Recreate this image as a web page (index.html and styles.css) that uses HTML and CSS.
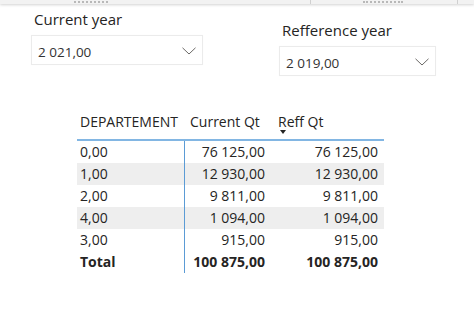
FILE: index.html
```html
<!DOCTYPE html>
<html lang="fr">
<head>
<meta charset="utf-8">
<title>Report</title>
<link rel="stylesheet" href="styles.css">
</head>
<body>
<div class="strip">
  <div class="strip-cell strip-a"><span class="strip-mark mark-a"></span></div>
  <div class="strip-cell strip-b"><span class="strip-mark mark-b"></span></div>
  <div class="strip-cell strip-c"></div>
</div>

<div class="slicers">
  <div class="slicer slicer-current">
    <div class="slicer-label">Current year</div>
    <div class="slicer-box">
      <span class="slicer-value">2 021,00</span>
      <svg class="chev" width="14" height="8" viewBox="0 0 14 8"><path d="M0.5 0.8 L7 7 L13.5 0.8" fill="none" stroke="#6b6966" stroke-width="1"/></svg>
    </div>
  </div>
  <div class="slicer slicer-ref">
    <div class="slicer-label">Refference year</div>
    <div class="slicer-box">
      <span class="slicer-value">2 019,00</span>
      <svg class="chev" width="14" height="8" viewBox="0 0 14 8"><path d="M0.5 0.8 L7 7 L13.5 0.8" fill="none" stroke="#6b6966" stroke-width="1"/></svg>
    </div>
  </div>
</div>

<table class="grid">
  <thead>
    <tr>
      <th class="c1">DEPARTEMENT</th>
      <th class="c2">Current Qt</th>
      <th class="c3"><span class="sorted">Reff Qt<span class="sort-arrow"></span></span></th>
    </tr>
  </thead>
  <tbody>
    <tr><td class="c1">0,00</td><td class="c2 num">76 125,00</td><td class="c3 num">76 125,00</td></tr>
    <tr class="alt"><td class="c1">1,00</td><td class="c2 num">12 930,00</td><td class="c3 num">12 930,00</td></tr>
    <tr><td class="c1">2,00</td><td class="c2 num">9 811,00</td><td class="c3 num">9 811,00</td></tr>
    <tr class="alt"><td class="c1">4,00</td><td class="c2 num">1 094,00</td><td class="c3 num">1 094,00</td></tr>
    <tr><td class="c1">3,00</td><td class="c2 num">915,00</td><td class="c3 num">915,00</td></tr>
    <tr class="total"><td class="c1">Total</td><td class="c2 num">100 875,00</td><td class="c3 num">100 875,00</td></tr>
  </tbody>
</table>
</body>
</html>
```
FILE: styles.css
```css
html, body {
  margin: 0;
  padding: 0;
  background: #ffffff;
}

body {
  width: 474px;
  height: 325px;
  overflow: hidden;
  font-family: "Open Sans", "Noto Sans", sans-serif;
  color: #252423;
}

/* top strip (bottom of previous visuals) */
.strip {
  display: flex;
  height: 4px;
  background: #f2f2f2;
  box-shadow: 0 1px 3px rgba(0, 0, 0, 0.18);
}

.strip-cell {
  position: relative;
  height: 100%;
}

.strip-a {
  width: 310px;
  border-right: 1px solid #d0d0d0;
}

.strip-b {
  width: 146px;
  border-right: 1px solid #d0d0d0;
}

.strip-c {
  flex: 1;
}

.strip-mark {
  position: absolute;
  top: 1px;
  height: 2px;
  border-top: 2px dotted #b8b8b8;
}

.mark-a {
  left: 74px;
  width: 34px;
}

.mark-b {
  left: 52px;
  width: 40px;
}

/* slicers */
.slicers {
  display: flex;
  align-items: flex-start;
  padding-left: 31px;
  gap: 76px;
  margin-top: 5px;
}

.slicer-current {
  width: 172px;
}

.slicer-ref {
  width: 157px;
  margin-top: 11px;
}

.slicer-label {
  font-size: 15px;
  line-height: 20px;
  padding-left: 3px;
  color: #252423;
  white-space: nowrap;
}

.slicer-box {
  box-sizing: border-box;
  height: 30px;
  margin-top: 6px;
  border: 1px solid #ebebeb;
  box-shadow: 0 0 1px rgba(0, 0, 0, 0.04);
  display: flex;
  align-items: center;
  justify-content: space-between;
  padding: 2px 6px 0 6px;
}

.slicer-value {
  font-size: 13.5px;
  line-height: 20px;
  color: #333333;
  padding-top: 2px;
}

.chev {
  display: block;
  margin-top: 0;
}

/* table */
.grid {
  margin: 35px 0 0 77px;
  width: 307px;
  border-collapse: collapse;
  font-size: 14px;
  line-height: 22px;
  table-layout: fixed;
}

.grid th {
  font-weight: normal;
  text-align: left;
  padding: 0 0 6px 0;
  border-bottom: 2px solid #82b6e3;
  white-space: nowrap;
  vertical-align: bottom;
}

.grid td {
  padding: 0;
  white-space: nowrap;
}

.grid .c1 {
  width: 107px;
  padding-left: 3px;
  box-sizing: border-box;
}

.grid td.c1 {
  border-right: 1px solid #5b9bd5;
}

.grid .c2 {
  width: 88px;
  box-sizing: border-box;
}

.grid th.c2 {
  padding-left: 6px;
}

.grid td.c2 {
  padding-right: 7px;
}

.grid .c3 {
  width: 112px;
  box-sizing: border-box;
}

.grid th.c3 {
  padding-left: 6px;
}

.grid td.c3 {
  padding-right: 6px;
}

.num {
  text-align: right;
}

.grid tr.alt td {
  background: #eeeeee;
}

.grid tr.total td {
  font-weight: bold;
}

.sorted {
  position: relative;
  display: inline-block;
}

.sort-arrow {
  position: absolute;
  left: 2px;
  top: 19px;
  width: 0;
  height: 0;
  border-left: 3.5px solid transparent;
  border-right: 3.5px solid transparent;
  border-top: 4px solid #252423;
}
```
